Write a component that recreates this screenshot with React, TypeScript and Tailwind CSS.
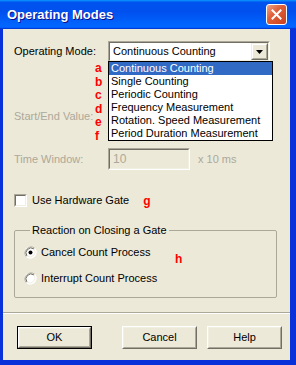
import React from "react";

const modes = [
  "Continuous Counting",
  "Single Counting",
  "Periodic Counting",
  "Frequency Measurement",
  "Rotation. Speed Measurement",
  "Period Duration Measurement",
];

const marks = ["a", "b", "c", "d", "e", "f"];

function Sunken({ className, children }: { className: string; children?: React.ReactNode }) {
  return (
    <div className={"border border-t-[#aca899] border-l-[#aca899] border-b-white border-r-white " + className}>
      <div className="h-full w-full border border-t-[#716f64] border-l-[#716f64] border-b-[#f1efe2] border-r-[#f1efe2] flex items-center">
        {children}
      </div>
    </div>
  );
}

function Radio({ checked }: { checked?: boolean }) {
  return (
    <svg width="13" height="13" viewBox="0 0 13 13">
      <circle cx="6.5" cy="6.5" r="6" fill="#fff" />
      <path d="M2.3 10.7 A6 6 0 0 1 10.7 2.3" fill="none" stroke="#aca899" strokeWidth="1" />
      <path d="M3 10 A5 5 0 0 1 10 3" fill="none" stroke="#716f64" strokeWidth="1" />
      <path d="M10.7 2.3 A6 6 0 0 1 2.3 10.7" fill="none" stroke="#fff" strokeWidth="1" />
      <path d="M10 3 A5 5 0 0 1 3 10" fill="none" stroke="#f1efe2" strokeWidth="1" />
      {checked && <circle cx="6.5" cy="6.5" r="2" fill="#000" />}
    </svg>
  );
}

function Btn({ label, def }: { label: string; def?: boolean }) {
  return (
    <div className={"w-[75px] h-[23px] " + (def ? "border border-black" : "")}>
      <div className="h-full w-full border border-t-white border-l-white border-b-[#716f64] border-r-[#716f64] bg-[#ece9d8]">
        <div className="h-full w-full border border-t-[#f1efe2] border-l-[#f1efe2] border-b-[#aca899] border-r-[#aca899] flex items-center justify-center">
          {label}
        </div>
      </div>
    </div>
  );
}

export default function App() {
  return (
    <div className="w-[296px] h-[365px] flex flex-col bg-[#0831d9] font-['Liberation_Sans',Arial,sans-serif] text-[11px] text-black">
      <div className="h-[29px] flex items-center justify-between pl-[7px] pr-[9px] bg-[linear-gradient(180deg,#0997ff,#0053ee_8%,#0050ee_40%,#0066ff_88%,#0066ff_93%,#005bff_95%,#003dd7_96%,#003dd7)]">
        <span className="text-white font-bold text-[13px] [text-shadow:1px_1px_#0f1089]">Operating Modes</span>
        <div className="w-[21px] h-[21px] rounded-[3px] border border-white bg-[linear-gradient(135deg,#f0a58a,#e0603a_40%,#c8401c)] flex items-center justify-center">
          <svg width="11" height="11" viewBox="0 0 11 11">
            <path d="M1.5 1.5 L9.5 9.5 M9.5 1.5 L1.5 9.5" stroke="#fff" strokeWidth="2" strokeLinecap="square" />
          </svg>
        </div>
      </div>
      <div className="relative flex-1 ml-[3px] mr-[6px] mb-[5px] bg-[#ece9d8] flex flex-col pl-[11px]">
        <div className="mt-[12px] h-[21px] flex items-center">
          <span className="w-[94px]">Operating Mode:</span>
          <Sunken className="w-[162px] h-[21px] bg-white">
            <span className="flex-1 pl-[3px]">Continuous Counting</span>
            <div className="w-[17px] h-[17px] border border-t-[#f1efe2] border-l-[#f1efe2] border-b-[#716f64] border-r-[#716f64] bg-[#ece9d8]">
              <div className="h-full w-full border border-t-white border-l-white border-b-[#aca899] border-r-[#aca899] flex items-center justify-center">
                <svg width="7" height="4" viewBox="0 0 7 4">
                  <path d="M0 0 H7 L3.5 4 Z" fill="#000" />
                </svg>
              </div>
            </div>
          </Sunken>
        </div>

        <div className="mt-[44px] h-[21px] flex items-center text-[#aca899]">Start/End Value:</div>

        <div className="mt-[21px] h-[22px] flex items-center text-[#aca899]">
          <span className="w-[94px]">Time Window:</span>
          <Sunken className="w-[82px] h-[22px]">
            <span className="pl-[3px] text-[12px]">10</span>
          </Sunken>
          <span className="ml-[8px]">x 10 ms</span>
        </div>

        <div className="mt-[24px] h-[13px] flex items-center">
          <div className="w-[13px] h-[13px] border border-t-[#aca899] border-l-[#aca899] border-b-white border-r-white">
            <div className="h-full w-full border border-t-[#716f64] border-l-[#716f64] border-b-[#f1efe2] border-r-[#f1efe2] bg-white" />
          </div>
          <span className="ml-[5px]">Use Hardware Gate</span>
          <span className="ml-[14px] text-[#ff0000] font-bold text-[12px]">g</span>
        </div>

        <fieldset className="mt-[17px] w-[263px] border border-[#aca899] rounded-[2px] pl-[9px] pb-[12px]">
          <legend className="ml-[6px] px-[2px] leading-[13px]">Reaction on Closing a Gate</legend>
          <div className="mt-[9px] h-[13px] flex items-center">
            <Radio checked />
            <span className="ml-[4px]">Cancel Count Process</span>
          </div>
          <div className="mt-[13px] h-[13px] flex items-center">
            <Radio />
            <span className="ml-[4px]">Interrupt Count Process</span>
          </div>
        </fieldset>

        <div className="mt-[14px] -ml-[11px] border-t border-t-[#aca899] border-b border-b-white" />

        <div className="mt-[12px] flex">
          <div className="ml-[3px]">
            <Btn label="OK" def />
          </div>
          <div className="ml-[30px]">
            <Btn label="Cancel" />
          </div>
          <div className="ml-[10px]">
            <Btn label="Help" />
          </div>
        </div>

        <span className="absolute left-[172px] top-[224px] text-[#ff0000] font-bold text-[12px] leading-[13px]">h</span>

        <div className="absolute left-[92px] top-[33px] flex flex-col text-[#ff0000] font-bold text-[12px]">
          {marks.map((m) => (
            <span key={m} className="h-[13.6px] leading-[13.6px]">
              {m}
            </span>
          ))}
        </div>

        <div className="absolute left-[105px] top-[32px] w-[165px] border border-black bg-white">
          {modes.map((m, i) => (
            <div
              key={m}
              className={"h-[13px] leading-[13px] pl-[2px] " + (i === 0 ? "bg-[#316ac5] text-white" : "")}
            >
              {m}
            </div>
          ))}
        </div>
      </div>
    </div>
  );
}
